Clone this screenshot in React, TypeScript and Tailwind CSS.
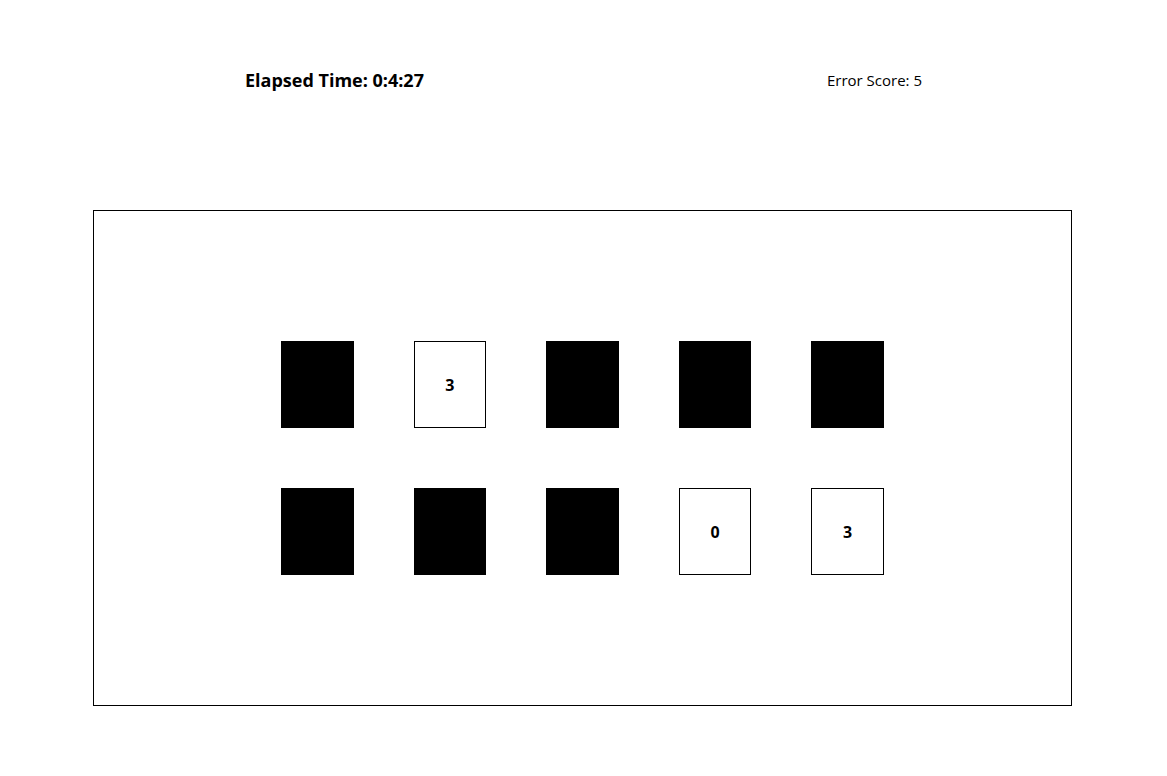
import React from 'react';

type Card = { value: number | null };

const cards: Card[] = [
  { value: null },
  { value: 3 },
  { value: null },
  { value: null },
  { value: null },
  { value: null },
  { value: null },
  { value: null },
  { value: 0 },
  { value: 3 },
];

export default function App() {
  return (
    <div className="min-h-screen bg-white text-black font-['Open_Sans','Noto_Sans',sans-serif]">
      {/* Header */}
      <header className="flex items-center justify-between px-[245px] pt-[66px] h-[94px]">
        <h1 className="text-[18px] font-bold leading-[28px]">Elapsed Time: 0:4:27</h1>
        <p className="text-[15px] leading-[28px]">Error Score: 5</p>
      </header>

      {/* Board */}
      <main className="ml-[93px] w-[979px] mt-[116px] h-[496px] border border-black flex items-center justify-center">
        <div className="grid grid-cols-[repeat(5,72.6px)] gap-x-[60px] gap-y-[60px]">
          {cards.map((card, i) =>
            card.value === null ? (
              <div key={i} className="h-[87px] bg-black" />
            ) : (
              <div
                key={i}
                className="h-[87px] border border-black bg-white flex items-center justify-center text-[16px] font-bold"
              >
                {card.value}
              </div>
            )
          )}
        </div>
      </main>
    </div>
  );
}
